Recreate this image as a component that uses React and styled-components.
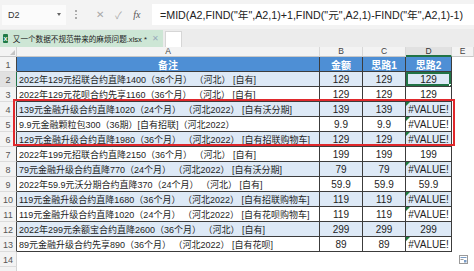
import React from 'react';
import styled, { createGlobalStyle } from 'styled-components';

const GlobalStyle = createGlobalStyle`
  html, body {
    margin: 0;
    padding: 0;
    background: #fff;
  }
  body {
    width: 474px;
    height: 271px;
    overflow: hidden;
    font-family: "Liberation Sans", "Noto Sans CJK SC", sans-serif;
  }
  * { box-sizing: border-box; }
`;

const Window = styled.div`
  width: 474px;
  height: 271px;
  display: flex;
  flex-direction: column;
  overflow: hidden;
  background: #fff;
`;

const FormulaBar = styled.div`
  height: 29px;
  flex: none;
  display: flex;
  align-items: center;
  background: #f3f3f3;
  padding: 0 0 0 2px;
`;

const NameBox = styled.div`
  width: 64px;
  height: 20px;
  background: #fbfbfb;
  display: flex;
  align-items: center;
  justify-content: space-between;
  padding: 0 5px 0 6px;
  font-size: 9px;
  color: #333;
`;

const Caret = styled.span`
  width: 0;
  height: 0;
  border-left: 2.5px solid transparent;
  border-right: 2.5px solid transparent;
  border-top: 3px solid #666;
`;

const Grip = styled.div`
  width: 20px;
  display: flex;
  flex-direction: column;
  align-items: center;
  gap: 2px;
  span {
    width: 1.5px;
    height: 1.5px;
    background: #aaa;
  }
`;

const FxTools = styled.div`
  width: 64px;
  height: 20px;
  display: flex;
  align-items: center;
  justify-content: space-around;
  padding: 0 4px;
  color: #a8a8a8;
  font-size: 10px;
`;

const Fx = styled.span`
  font-family: "Liberation Serif", serif;
  font-style: italic;
  font-size: 10px;
  color: #555;
`;

const FormulaInput = styled.div`
  flex: 1;
  height: 21px;
  background: #fff;
  margin-left: 2px;
  padding-left: 8px;
  display: flex;
  align-items: center;
  font-size: 10.7px;
  color: #222;
  white-space: nowrap;
  overflow: hidden;
`;

const TabBar = styled.div`
  height: 18px;
  flex: none;
  display: flex;
  align-items: flex-end;
  gap: 2px;
  background: #ececec;
`;

const FileTab = styled.div`
  width: 163px;
  height: 17px;
  background: #cde6d5;
  display: flex;
  align-items: center;
  padding: 0 4px 0 3px;
  gap: 5px;
  font-size: 7.6px;
  color: #222;
  white-space: nowrap;
`;

const FileIcon = styled.span`
  width: 8px;
  height: 9px;
  background: #1f7a45;
  color: #fff;
  font-size: 6px;
  font-weight: bold;
  display: flex;
  align-items: center;
  justify-content: center;
  border-radius: 1px;
`;

const TabClose = styled.span`
  margin-left: auto;
  color: #9ab;
  font-size: 8px;
`;

const NewTab = styled.div`
  width: 17px;
  height: 16px;
  background: #fff;
  border: 1px solid #d6d6d6;
  border-bottom: none;
`;

const Sheet = styled.div`
  position: relative;
  flex: 1;
  display: grid;
  grid-template-columns: 17px 303px 43px 43px 46px 22px;
  grid-template-rows: 10px repeat(15, 15px);
  overflow: hidden;
`;

const Corner = styled.div`
  background: #f3f3f3;
  border-right: 1px solid #d4d4d4;
  border-bottom: 1px solid #c8c8c8;
  position: relative;
  &::after {
    content: '';
    position: absolute;
    right: 1px;
    bottom: 1px;
    border-left: 5px solid transparent;
    border-bottom: 5px solid #c4c4c4;
  }
`;

const ColHead = styled.div`
  background: ${(p) => (p.$active ? '#e1e1e1' : '#f3f3f3')};
  border-right: 1px solid #d8d8d8;
  border-bottom: ${(p) => (p.$active ? '2px solid #217346' : '1px solid #c8c8c8')};
  display: flex;
  align-items: center;
  justify-content: center;
  font-size: 8.5px;
  color: ${(p) => (p.$active ? '#333' : '#444')};
  line-height: 1;
`;

const RowHead = styled.div`
  background: ${(p) => (p.$active ? '#e1e1e1' : '#f3f3f3')};
  border-right: 1px solid ${(p) => (p.$active ? '#217346' : p.$table ? '#444' : '#d4d4d4')};
  border-bottom: 1px solid #dcdcdc;
  display: flex;
  align-items: center;
  justify-content: center;
  font-size: 9px;
  color: #555;
  padding-top: 2px;
`;

const Cell = styled.div`
  position: relative;
  background: ${(p) => p.$bg || '#fff'};
  border-right: 1px solid #3c3c3c;
  border-bottom: 1px solid #3c3c3c;
  display: flex;
  align-items: center;
  justify-content: ${(p) => (p.$left ? 'flex-start' : 'center')};
  padding: ${(p) => (p.$left ? '0 0 0 2px' : '0')};
  font-size: ${(p) => (p.$left ? '9px' : '10px')};
  font-weight: ${(p) => (p.$head ? 'bold' : 'normal')};
  color: ${(p) => (p.$head ? '#fff' : '#1e1e1e')};
  white-space: nowrap;
  overflow: hidden;
  box-shadow: ${(p) => (p.$selected ? 'inset 0 0 0 2px #217346' : 'none')};
  ${(p) =>
    p.$error &&
    `&::before {
      content: '';
      position: absolute;
      left: 0;
      top: 0;
      border-top: 4px solid #1c7a3c;
      border-right: 4px solid transparent;
    }`}
`;

const Blank = styled.div`
  background: #fff;
  display: flex;
  align-items: center;
  justify-content: center;
`;

const Handle = styled.span`
  position: absolute;
  right: -2px;
  bottom: -2px;
  width: 4px;
  height: 4px;
  background: #217346;
  border: 1px solid #fff;
`;

const Highlight = styled.div`
  position: absolute;
  left: 13px;
  top: 52px;
  width: 442px;
  height: 47px;
  border: 2px solid #e0282c;
  pointer-events: none;
`;

const HEAD_BG = '#4e8fd5';
const BAND_BG = '#dde9f6';

const rows = [
  ['2022年129元招联合约直降1400（36个月） （河北） [自有]', '129', '129', '129'],
  ['2022年129元花呗合约先享1160（36个月） （河北） [自有]', '129', '129', '129'],
  ['139元金融升级合约直降1020（24个月） （河北2022） [自有沃分期]', '139', '139', '#VALUE!'],
  ['9.9元金融颗粒包300（36期）[自有招联]（河北2022）', '9.9', '9.9', '#VALUE!'],
  ['129元金融升级合约直降1980（36个月） （河北2022） [自有招联购物车]', '129', '129', '#VALUE!'],
  ['2022年199元招联合约直降2150（36个月） （河北） [自有]', '199', '199', '199'],
  ['79元金融升级合约直降770（24个月） （河北2022） [自有沃分期]', '79', '79', '#VALUE!'],
  ['2022年59.9元沃分期合约直降370（24个月） （河北） [自有]', '59.9', '59.9', '59.9'],
  ['119元金融升级合约直降1680（36个月） （河北2022） [自有招联购物车]', '119', '119', '#VALUE!'],
  ['119元金融升级合约直降1020（24个月） （河北2022） [自有花呗购物车]', '119', '119', '#VALUE!'],
  ['2022年299元余额宝合约直降2600（36个月） （河北） [自有]', '299', '299', '299'],
  ['89元金融升级合约先享890（36个月） （河北2022） [自有花呗]', '89', '89', '#VALUE!'],
];

const QuickIcon = () => (
  <svg width="9" height="9" viewBox="0 0 9 9">
    <rect x="0.5" y="0.5" width="8" height="8" fill="#fff" stroke="#9a9a9a" />
    <rect x="1.5" y="2" width="6" height="1" fill="#7a9cc6" />
    <rect x="1.5" y="4" width="3" height="1" fill="#9a9a9a" />
    <rect x="5" y="5" width="2.5" height="2.5" fill="#7a9cc6" />
  </svg>
);

export default function App() {
  return (
    <Window>
      <GlobalStyle />
      <FormulaBar>
        <NameBox>
          D2
          <Caret />
        </NameBox>
        <Grip>
          <span />
          <span />
          <span />
        </Grip>
        <FxTools>
          <span>✕</span>
          <span>✓</span>
          <Fx>fx</Fx>
        </FxTools>
        <FormulaInput>=MID(A2,FIND("年",A2,1)+1,FIND("元",A2,1)-FIND("年",A2,1)-1)</FormulaInput>
      </FormulaBar>

      <TabBar>
        <FileTab>
          <FileIcon>X</FileIcon>
          <span>又一个数据不规范带来的麻烦问题.xlsx *</span>
          <TabClose>✕</TabClose>
        </FileTab>
        <NewTab />
      </TabBar>

      <Sheet>
        <Corner />
        <ColHead>A</ColHead>
        <ColHead>B</ColHead>
        <ColHead>C</ColHead>
        <ColHead $active>D</ColHead>
        <ColHead>E</ColHead>

        <RowHead $table>1</RowHead>
        <Cell $bg={HEAD_BG} $head>备注</Cell>
        <Cell $bg={HEAD_BG} $head>金额</Cell>
        <Cell $bg={HEAD_BG} $head>思路1</Cell>
        <Cell $bg={HEAD_BG} $head>思路2</Cell>
        <Blank />

        {rows.map(([note, amount, idea1, idea2], i) => {
          const n = i + 2;
          const bg = n % 2 === 0 ? BAND_BG : '#fff';
          return (
            <React.Fragment key={n}>
              <RowHead $table $active={n === 2}>{n}</RowHead>
              <Cell $bg={bg} $left>{note}</Cell>
              <Cell $bg={bg}>{amount}</Cell>
              <Cell $bg={bg}>{idea1}</Cell>
              <Cell $bg={bg} $selected={n === 2} $error={idea2 === '#VALUE!'}>
                {idea2}
                {n === 2 && <Handle />}
              </Cell>
              <Blank />
            </React.Fragment>
          );
        })}

        {[14, 15].map((n) => (
          <React.Fragment key={n}>
            <RowHead>{n}</RowHead>
            <Blank />
            <Blank />
            <Blank />
            <Blank />
            <Blank>{n === 14 && <QuickIcon />}</Blank>
          </React.Fragment>
        ))}

        <Highlight />
      </Sheet>
    </Window>
  );
}
